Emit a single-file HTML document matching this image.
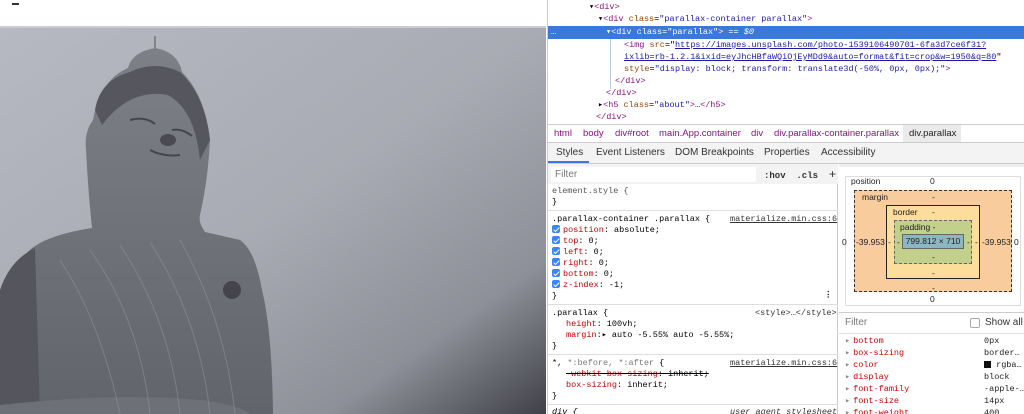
<!DOCTYPE html>
<html><head><style>
*{margin:0;padding:0;box-sizing:border-box}
body{width:1024px;height:414px;overflow:hidden;background:#fff;position:relative;font-family:"Liberation Sans",sans-serif}
.mono{font-family:"Liberation Mono",monospace;font-size:8.5px}
.abs{position:absolute;white-space:nowrap}
.tag{color:#881280}.attr{color:#994500}.val{color:#1a1aa6}
.dev{position:absolute;left:547px;top:0;width:477px;height:414px;border-left:1px solid #ccc;background:#fff;overflow:hidden}
.ln{position:absolute;height:12px;line-height:12px;white-space:nowrap}
.prop{color:#c80000}
.cb{display:inline-block;width:8px;height:8px;background:#3b86f7;border-radius:2px;margin-right:3px;vertical-align:-1px;position:relative}
.cb:after{content:"";position:absolute;left:2.5px;top:0.5px;width:2px;height:5px;border:solid #fff;border-width:0 1.5px 1.5px 0;transform:rotate(45deg)}
.sep{position:absolute;left:0;width:290px;height:1px;background:#ddd}
.cp{position:absolute;left:0;width:187px;height:12px;line-height:12px;font-size:8.5px}
</style></head><body>
<div class="abs" style="left:12px;top:3px;width:7px;height:2px;background:#333"></div>
<svg class="abs" style="left:0;top:26px" width="546" height="388" viewBox="0 26 546 388">
<defs>
<linearGradient id="sky" x1="0" y1="0" x2="1" y2="1"><stop offset="0" stop-color="#b6b8c2"/><stop offset="0.5" stop-color="#a9abb4"/><stop offset="0.8" stop-color="#8e9099"/><stop offset="1" stop-color="#3f4048"/></linearGradient>
<linearGradient id="st" x1="0" y1="0" x2="0" y2="1"><stop offset="0" stop-color="#7e8088"/><stop offset="1" stop-color="#62646c"/></linearGradient>
</defs>
<rect x="0" y="26" width="546" height="388" fill="url(#sky)"/>
<rect x="0" y="26" width="546" height="2" fill="#ccc"/>
<line x1="155" y1="36" x2="155" y2="50" stroke="#555" stroke-width="1"/>
<path d="M155 48 Q132 52 128 68 Q100 80 93 120 Q84 132 86 150 Q88 190 92 228 Q40 236 25 255 Q5 290 0 330 L0 414 L273 414 Q272 330 262 290 Q255 250 240 240 L205 232 Q198 222 200 215 Q208 180 210 140 Q205 95 182 72 Q178 52 155 48 Z" fill="url(#st)"/>
<path d="M95 110 Q100 80 130 72 Q155 60 180 72 Q205 95 210 140 L200 160 Q195 110 168 95 Q130 88 102 125 Z" fill="#55565e"/>
<path d="M130 120 Q145 116 155 124 M172 130 Q182 128 192 136" stroke="#45464d" stroke-width="2" fill="none"/>
<ellipse cx="168" cy="140" rx="8" ry="6" fill="#4a4b52"/>
<path d="M150 150 Q163 157 180 155" stroke="#45464d" stroke-width="2" fill="none"/>
<path d="M0 290 Q10 260 35 248 L40 414 L0 414 Z" fill="#55565d"/>
<path d="M0 405 Q120 392 200 400 Q240 405 250 414 L0 414Z" fill="#6e7078"/>
<circle cx="232" cy="290" r="9" fill="#44454c"/>
<g stroke="#8e9098" stroke-width="1" fill="none" opacity="0.6">
<path d="M60 260 Q100 320 120 414"/><path d="M90 250 Q140 320 150 414"/><path d="M120 245 Q170 320 180 414"/><path d="M150 242 Q200 320 210 414"/><path d="M180 240 Q225 320 235 414"/>
</g>
</svg>
<div class="dev">
<div class="mono" style="position:absolute;left:0;top:0;width:477px;height:125px">
<div class="ln" style="left:41px;top:1px">▾<span class="tag">&lt;div&gt;</span></div>
<div class="ln" style="left:50px;top:13px">▾<span class="tag">&lt;div </span><span class="attr">class</span>=<span class="val">"parallax-container parallax"</span><span class="tag">&gt;</span></div>
<div style="position:absolute;left:0;top:26px;width:477px;height:13px;background:#3879d9"></div>
<div class="ln" style="left:3px;top:26px;color:#fff">…</div>
<div class="ln" style="left:58px;top:26px;color:#fff">▾&lt;div class="parallax"&gt; == <i>$0</i></div>
<div style="position:absolute;left:62px;top:39px;width:1px;height:50px;background:#bcd"></div>
<div class="ln" style="left:76px;top:39px"><span class="tag">&lt;img </span><span class="attr">src</span>="<u style="color:#1a1aa6">https://images.unsplash.com/photo-1539106490701-6fa3d7ce6f31?</u></div>
<div class="ln" style="left:76px;top:51px"><u style="color:#1a1aa6">ixlib=rb-1.2.1&amp;ixid=eyJhcHBfaWQiOjEyMDd9&amp;auto=format&amp;fit=crop&amp;w=1950&amp;q=80</u>"</div>
<div class="ln" style="left:76px;top:63px"><span class="attr">style</span>=<span class="val">"display: block; transform: translate3d(-50%, 0px, 0px);"</span><span class="tag">&gt;</span></div>
<div class="ln tag" style="left:67px;top:75px">&lt;/div&gt;</div>
<div class="ln tag" style="left:58px;top:87px">&lt;/div&gt;</div>
<div class="ln" style="left:50px;top:99px">▸<span class="tag">&lt;h5 </span><span class="attr">class</span>=<span class="val">"about"</span><span class="tag">&gt;</span>…<span class="tag">&lt;/h5&gt;</span></div>
<div class="ln tag" style="left:48px;top:111px">&lt;/div&gt;</div>
</div>
<div style="position:absolute;left:0;top:124px;width:477px;height:18px;border-top:1px solid #ccc;background:#fff;font-size:9.5px;line-height:17px;color:#881280">
<span class="abs" style="left:6px">html</span><span class="abs" style="left:35px">body</span><span class="abs" style="left:67px">div#root</span><span class="abs" style="left:111px">main.App.container</span><span class="abs" style="left:203px">div</span><span class="abs" style="left:226px">div.parallax-container.parallax</span>
<span class="abs" style="left:355px;width:58px;background:#eaeaea;color:#222;padding-left:6px">div.parallax</span>
</div>
<div style="position:absolute;left:0;top:142px;width:477px;height:22px;background:#f3f3f3;border-top:1px solid #ccc;border-bottom:1px solid #ccc;font-size:10px;line-height:20px;color:#333">
<span class="abs" style="left:8px">Styles</span><span class="abs" style="left:48px">Event Listeners</span><span class="abs" style="left:127px">DOM Breakpoints</span><span class="abs" style="left:216px">Properties</span><span class="abs" style="left:273px">Accessibility</span>
<div class="abs" style="left:0;top:18px;width:41px;height:2px;background:#3879d9"></div>
</div>
<div style="position:absolute;left:0;top:164px;width:290px;height:250px;background:#fff;border-right:1px solid #ccc" class="mono">
<div class="abs" style="left:0;top:0;width:290px;height:20px;background:#f3f3f3"></div>
<div class="abs" style="left:3px;top:3px;width:205px;height:15px;background:#fff;font-family:'Liberation Sans';font-size:10px;color:#777;line-height:15px;padding-left:4px">Filter</div>
<div class="ln" style="left:216px;top:5px;font-weight:bold;color:#333;font-size:9px">:hov&nbsp;&nbsp;.cls&nbsp;&nbsp;<span style="font-size:12px;font-weight:normal">+</span></div>
<div class="ln" style="left:4px;top:21px;color:#555">element.style {</div>
<div class="ln" style="left:4px;top:32px">}</div>
<div class="sep" style="top:46px"></div>
<div class="ln" style="left:4px;top:49px">.parallax-container .parallax {</div>
<div class="ln" style="left:182px;top:49px;color:#333;text-decoration:underline">materialize.min.css:6</div>
<div class="ln" style="left:4px;top:60px"><span class="cb"></span><span class="prop">position</span>: absolute;</div>
<div class="ln" style="left:4px;top:71px"><span class="cb"></span><span class="prop">top</span>: 0;</div>
<div class="ln" style="left:4px;top:82px"><span class="cb"></span><span class="prop">left</span>: 0;</div>
<div class="ln" style="left:4px;top:93px"><span class="cb"></span><span class="prop">right</span>: 0;</div>
<div class="ln" style="left:4px;top:104px"><span class="cb"></span><span class="prop">bottom</span>: 0;</div>
<div class="ln" style="left:4px;top:115px"><span class="cb"></span><span class="prop">z-index</span>: -1;</div>
<div class="ln" style="left:4px;top:126px">}</div><div class="ln" style="left:276px;top:125px;font-weight:bold">⋮</div>
<div class="sep" style="top:140px"></div>
<div class="ln" style="left:4px;top:143px">.parallax {</div>
<div class="ln" style="left:207px;top:143px;color:#333">&lt;style&gt;…&lt;/style&gt;</div>
<div class="ln" style="left:18px;top:154px"><span class="prop">height</span>: 100vh;</div>
<div class="ln" style="left:18px;top:165px"><span class="prop">margin</span>:▸ auto -5.55% auto -5.55%;</div>
<div class="ln" style="left:4px;top:176px">}</div>
<div class="sep" style="top:190px"></div>
<div class="ln" style="left:4px;top:193px">*, <span style="color:#777">*:before, *:after</span> {</div>
<div class="ln" style="left:182px;top:193px;color:#333;text-decoration:underline">materialize.min.css:6</div>
<div class="ln" style="left:18px;top:204px;text-decoration:line-through"><span class="prop">-webkit-box-sizing</span>: inherit;</div>
<div class="ln" style="left:18px;top:215px"><span class="prop">box-sizing</span>: inherit;</div>
<div class="ln" style="left:4px;top:226px">}</div>
<div class="sep" style="top:240px"></div>
<div class="ln" style="left:4px;top:242px;font-style:italic">div {</div>
<div class="ln" style="left:182px;top:242px;font-style:italic;color:#333">user agent stylesheet</div>
</div>
<div style="position:absolute;left:291px;top:164px;width:186px;height:250px;background:#fff;font-size:8.5px;color:#222">
<div class="abs" style="left:0;top:0;width:186px;height:3px;background:#eee"></div>
<div class="abs" style="left:6px;top:12px;width:176px;height:130px;border:1px solid #ddd"></div>
<div class="abs" style="left:12px;top:12px">position</div><div class="abs" style="left:91px;top:12px">0</div>
<div class="abs" style="left:15px;top:26px;width:158px;height:102px;background:#f9cc9d;border:1px dashed #333"></div>
<div class="abs" style="left:23px;top:28px">margin</div><div class="abs" style="left:93px;top:28px">-</div>
<div class="abs" style="left:47px;top:41px;width:94px;height:74px;background:#fddd9b;border:1.5px solid #222"></div>
<div class="abs" style="left:54px;top:43px">border</div><div class="abs" style="left:93px;top:43px">-</div>
<div class="abs" style="left:55px;top:56px;width:78px;height:44px;background:#c3d08b;border:1px dashed #666"></div>
<div class="abs" style="left:61px;top:58px">padding -</div>
<div class="abs" style="left:63px;top:70px;width:62px;height:15px;background:#8cb6c0;border:1px solid #666;text-align:center;line-height:13px">799.812 × 710</div>
<div class="abs" style="left:3px;top:73px">0</div><div class="abs" style="left:17px;top:73px">-39.953</div><div class="abs" style="left:49px;top:73px">-</div><div class="abs" style="left:58px;top:73px">-</div>
<div class="abs" style="left:128px;top:73px">-</div><div class="abs" style="left:136px;top:73px">-</div><div class="abs" style="left:143px;top:73px">-39.953</div><div class="abs" style="left:175px;top:73px">0</div>
<div class="abs" style="left:93px;top:88px">-</div><div class="abs" style="left:93px;top:104px">-</div><div class="abs" style="left:93px;top:119px">-</div><div class="abs" style="left:91px;top:130px">0</div>
<div class="abs" style="left:0;top:148px;width:186px;height:22px;border-top:1px solid #ccc;border-bottom:1px solid #ddd;font-size:10px;line-height:20px;color:#777"><span style="padding-left:6px">Filter</span>
<span class="abs" style="left:131px;top:5px;width:10px;height:10px;border:1px solid #aaa;border-radius:2px"></span><span class="abs" style="left:146px;color:#333">Show all</span></div>
<div class="mono" style="position:absolute;left:0;top:171px;width:186px">
<div class="cp" style="top:0"><span style="color:#888;padding:0 3px 0 6px">▸</span><span class="prop">bottom</span><span class="abs" style="left:145px">0px</span></div>
<div class="cp" style="top:12px"><span style="color:#888;padding:0 3px 0 6px">▸</span><span class="prop">box-sizing</span><span class="abs" style="left:145px">border…</span></div>
<div class="cp" style="top:24px"><span style="color:#888;padding:0 3px 0 6px">▸</span><span class="prop">color</span><span class="abs" style="left:145px"><span style="display:inline-block;width:7px;height:7px;background:#111;vertical-align:-1px"></span> rgba…</span></div>
<div class="cp" style="top:36px"><span style="color:#888;padding:0 3px 0 6px">▸</span><span class="prop">display</span><span class="abs" style="left:145px">block</span></div>
<div class="cp" style="top:48px"><span style="color:#888;padding:0 3px 0 6px">▸</span><span class="prop">font-family</span><span class="abs" style="left:145px">-apple-…</span></div>
<div class="cp" style="top:60px"><span style="color:#888;padding:0 3px 0 6px">▸</span><span class="prop">font-size</span><span class="abs" style="left:145px">14px</span></div>
<div class="cp" style="top:72px"><span style="color:#888;padding:0 3px 0 6px">▸</span><span class="prop">font-weight</span><span class="abs" style="left:145px">400</span></div>
</div>
</div>
</div>
</body></html>
